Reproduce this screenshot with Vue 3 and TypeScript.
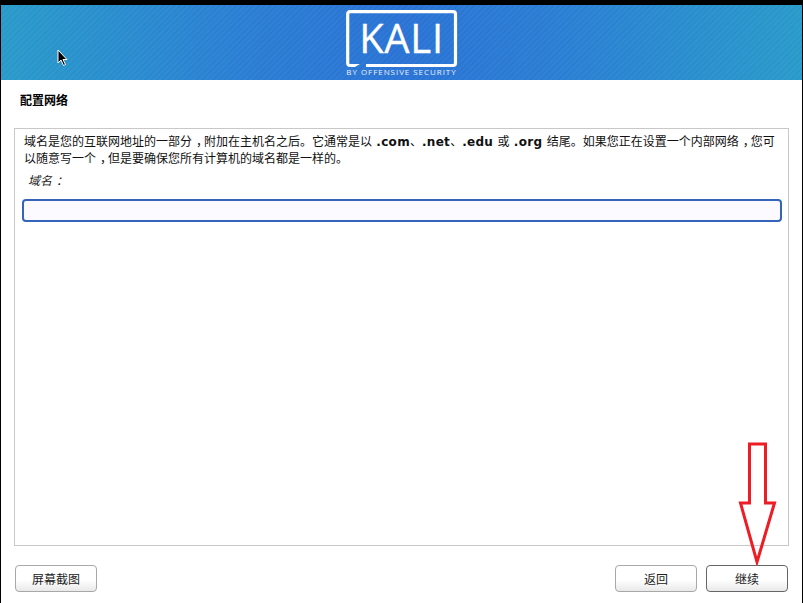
<script setup lang="ts">
const desc = ['.com', '、', '.net', '、', '.edu', ' 或 ', '.org', ' 结尾。如果您正在设置一个内部网络', '，', '您可']
</script>

<template>
  <div class="screen">
    <header class="banner">
      <div class="logo">
        <svg class="logo-frame" width="112" height="58" viewBox="0 0 112 58">
          <path d="M9 55.5 H4 Q1.7 55.5 1.7 53 V4 Q1.7 1.7 4 1.7 H107 Q109.5 1.7 109.5 4 V53 Q109.5 55.5 107 55.5 H20" fill="none" stroke="#fff" stroke-width="3.2" />
          <path d="M9 57 V54 L14 54 Z" fill="#fff" />
        </svg>
        <span class="kali">KALI</span>
        <span class="tag">BY OFFENSIVE SECURITY</span>
      </div>
      <svg class="cursor" width="12" height="18" viewBox="0 0 12 18">
        <path d="M1 1 V14 L4 11 L6.5 16.5 L8.5 15.5 L6 10.5 H10 Z" fill="#000" stroke="#fff" stroke-width="1" />
      </svg>
    </header>
    <main class="content">
      <h1 class="title">配置网络</h1>
      <section class="panel">
        <p class="desc">
          域名是您的互联网地址的一部分<span class="cm">，</span>附加在主机名之后。它通常是以
          <template v-for="(part, i) in desc" :key="i">
            <b v-if="part.startsWith('.')" class="dom">{{ part }}</b>
            <span v-else-if="part === '，'" class="cm">{{ part }}</span>
            <template v-else>{{ part }}</template>
          </template>
          <br />以随意写一个<span class="cm">，</span>但是要确保您所有计算机的域名都是一样的。
        </p>
        <label class="label">域名<span class="cm">：</span></label>
        <input class="field" type="text" />
      </section>
      <footer class="actions">
        <button class="btn">屏幕截图</button>
        <div class="right">
          <button class="btn">返回</button>
          <button class="btn primary">继续</button>
        </div>
      </footer>
    </main>
    <svg class="arrow" width="40" height="124" viewBox="0 0 40 124">
      <path d="M11.5 3 H27.5 V62 H36.5 L19 121 L2.5 62 H11.5 Z" fill="none" stroke="#ee1c25" stroke-width="3" />
    </svg>
  </div>
</template>

<style>
html, body { margin: 0; background: #000; overflow: hidden; }
</style>

<style scoped>
.screen {
  position: relative;
  width: 803px;
  height: 603px;
  box-sizing: border-box;
  padding: 5px 1px 0 1px;
  background: #000;
  font-family: "DejaVu Sans", "Noto Sans CJK SC", sans-serif;
  display: flex;
  flex-direction: column;
}
.banner {
  position: relative;
  height: 75px;
  flex: none;
  display: flex;
  justify-content: center;
  background:
    repeating-linear-gradient(135deg, rgba(255,255,255,0.025) 0 2px, rgba(0,0,0,0.015) 2px 4px),
    linear-gradient(90deg, #2a9ccb 0%, #2b80d5 30%, #2b74d6 50%, #2b80d5 70%, #2a9ccb 100%);
}
.logo {
  position: relative;
  width: 112px;
  height: 75px;
  display: flex;
  flex-direction: column;
  align-items: center;
  color: #fff;
}
.logo-frame { position: absolute; left: 0; top: 5px; }
.kali {
  font-family: "Open Sans", sans-serif;
  font-size: 40px;
  line-height: 40px;
  margin-top: 13px;
  letter-spacing: 0.7px;
  -webkit-text-stroke: 0.3px #fff;
}
.tag {
  font-family: "Open Sans", sans-serif;
  font-size: 8px;
  line-height: 10px;
  letter-spacing: 0.95px;
  margin-top: 9px;
  white-space: nowrap;
  opacity: 0.9;
}
.cursor { position: absolute; left: 56px; top: 44px; }
.content {
  flex: 1;
  min-height: 0;
  background: #fff;
  display: flex;
  flex-direction: column;
  padding: 0 13px 0 13px;
}
.title {
  margin: 0;
  padding: 13px 0 0 6px;
  height: 25px;
  font-size: 12px;
  line-height: 16px;
  font-weight: 700;
  color: #000;
}
.panel {
  margin-top: 10px;
  height: 418px;
  flex: none;
  box-sizing: border-box;
  border: 1px solid #c8c8c8;
  padding: 5px 7px 0 7px;
  display: flex;
  flex-direction: column;
}
.desc {
  margin: 0;
  padding-left: 2px;
  font-size: 12px;
  line-height: 17px;
  color: #111;
  white-space: nowrap;
  word-spacing: 0.5px;
}
.cm {
  display: inline-block;
  width: 12px;
  padding-left: 4px;
  box-sizing: border-box;
  font-family: "Noto Sans CJK SC", sans-serif;
  font-feature-settings: "halt";
  line-height: 10px;
}
.dom { font-weight: 700; font-size: 12px; letter-spacing: 0.3px; }
.label {
  height: 16px;
  margin-top: 5px;
  padding-left: 6px;
  font-size: 12px;
  line-height: 16px;
  font-style: italic;
  color: #222;
}
.field {
  flex: none;
  margin-top: 10px;
  height: 23px;
  width: 760px;
  box-sizing: border-box;
  border: 2px solid #3465b8;
  border-radius: 4px;
  background: #fdfaff;
  outline: none;
  padding: 0 4px;
}
.actions {
  display: flex;
  justify-content: space-between;
  align-items: flex-start;
  margin-top: 19px;
  padding: 0 1px 0 1px;
}
.right { display: flex; gap: 9px; }
.btn {
  width: 82px;
  height: 27px;
  box-sizing: border-box;
  border: 1px solid #a8a8a8;
  border-radius: 4px;
  background: linear-gradient(180deg, #ffffff 0%, #ffffff 55%, #e9e9e9 100%);
  font-family: inherit;
  font-size: 12px;
  color: #222;
  padding: 0;
  cursor: pointer;
}
.primary { border-color: #666; }
.arrow { position: absolute; left: 738px; top: 441px; pointer-events: none; }
</style>
